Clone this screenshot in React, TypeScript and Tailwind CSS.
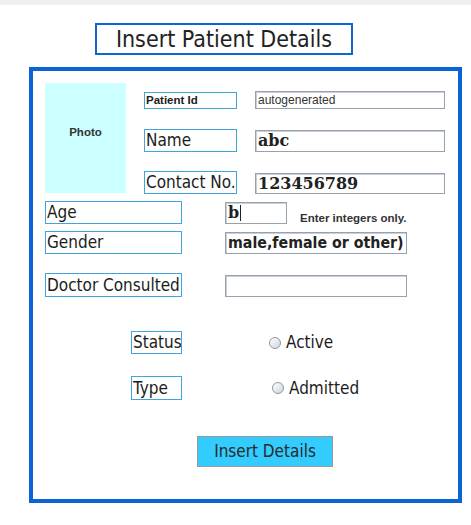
import React from 'react';

// Tahoma-like face for the Swing labels
const label =
  "flex items-center border border-[#3ea6dc] bg-white pl-[1px] text-[17px] leading-none text-[#1c1c1c] font-['DejaVu_Sans_Condensed','DejaVu_Sans',sans-serif] font-stretch-condensed whitespace-nowrap overflow-hidden";

const field =
  'border border-[#98a2af] shadow-[inset_1px_1px_0_#c9cfd7] bg-white flex items-center overflow-hidden whitespace-nowrap';

const Radio = ({ text }: { text: string }) => (
  <div className="flex items-center gap-[5px]">
    <span className="inline-block w-[12px] h-[12px] rounded-full border border-[#8d98a6] bg-linear-to-br from-white to-[#cdd5de]" />
    <span className="text-[17px] leading-none text-[#1c1c1c] font-['DejaVu_Sans_Condensed','DejaVu_Sans',sans-serif] font-stretch-condensed">
      {text}
    </span>
  </div>
);

export default function App() {
  return (
    <div className="w-[471px] h-[525px] bg-white overflow-hidden">
      <div className="h-[5px] bg-[#efefef]" />

      {/* Title */}
      <div className="ml-[95px] mt-[18px] w-[258px] h-[32px] border-2 border-[#0a66d0] flex items-center justify-center text-[23px] leading-none text-[#222] font-['DejaVu_Sans_Condensed','DejaVu_Sans',sans-serif] font-stretch-condensed">
        Insert Patient Details
      </div>

      {/* Form panel */}
      <div className="ml-[29px] mt-[12px] w-[433px] h-[436px] border-4 border-[#0a64d6]">
        <div className="flex ml-[12px] mt-[12px]">
          <div className="w-[81px] h-[110px] bg-[#ccffff] flex items-center justify-center pb-[10px] text-[11.5px] font-bold text-[#333] font-['Liberation_Sans',Arial,sans-serif]">
            Photo
          </div>
          <div className="ml-[18px] mt-[8px] flex flex-col">
            <div className="flex items-end h-[18px]">
              <div className="w-[93px] h-[17px] flex items-center border border-[#3ea6dc] pl-[1px] text-[11.5px] font-bold text-[#1c1c1c] font-['Liberation_Sans',Arial,sans-serif]">
                Patient Id
              </div>
              <div className={`${field} ml-[18px] w-[190px] h-[18px] pl-[2px] text-[12px] text-[#333] font-['Liberation_Sans',Arial,sans-serif]`}>
                autogenerated
              </div>
            </div>
            <div className="flex items-start mt-[20px]">
              <div className={`${label} w-[93px] h-[23px]`}>Name</div>
              <div className={`${field} ml-[18px] mt-[1px] w-[190px] h-[22px] pl-[2px] text-[16px] font-bold text-[#222] font-['DejaVu_Serif',serif]`}>
                abc
              </div>
            </div>
            <div className="flex items-start mt-[19px]">
              <div className={`${label} w-[93px] h-[23px]`}>Contact No.</div>
              <div className={`${field} ml-[18px] mt-[2px] w-[190px] h-[21px] pl-[2px] text-[16px] font-bold text-[#222] font-['DejaVu_Serif',serif]`}>
                123456789
              </div>
            </div>
          </div>
        </div>

        {/* Age */}
        <div className="flex items-start h-[23px] ml-[12px] mt-[7px]">
          <div className={`${label} w-[137px] h-[23px]`}>Age</div>
          <div className={`${field} ml-[43px] mt-[1px] w-[62px] h-[22px] pl-[2px] text-[16px] font-bold text-[#222] font-['DejaVu_Serif',serif]`}>
            b<span className="inline-block w-[1px] h-[16px] bg-[#222] ml-[1px]" />
          </div>
          <div className="ml-[13px] mt-[12px] text-[11.5px] leading-none font-bold text-[#333] font-['Liberation_Sans',Arial,sans-serif]">
            Enter integers only.
          </div>
        </div>

        {/* Gender */}
        <div className="flex items-start ml-[12px] mt-[7px]">
          <div className={`${label} w-[137px] h-[23px]`}>Gender</div>
          <div className={`${field} ml-[43px] mt-[1px] w-[182px] h-[22px] pl-[2px] text-[15.8px] font-bold text-[#222] font-['DejaVu_Sans_Condensed','DejaVu_Sans',sans-serif] font-stretch-condensed`}>
            male,female or other)
          </div>
        </div>

        {/* Doctor */}
        <div className="flex items-start ml-[12px] mt-[19px]">
          <div className={`${label} w-[137px] h-[24px]`}>Doctor Consulted</div>
          <div className={`${field} ml-[43px] mt-[2px] w-[182px] h-[22px]`} />
        </div>

        {/* Status */}
        <div className="flex items-center ml-[98px] mt-[34px]">
          <div className={`${label} w-[51px] h-[23px]`}>Status</div>
          <div className="ml-[87px]">
            <Radio text="Active" />
          </div>
        </div>

        {/* Type */}
        <div className="flex items-center ml-[98px] mt-[22px]">
          <div className={`${label} w-[51px] h-[24px]`}>Type</div>
          <div className="ml-[90px]">
            <Radio text="Admitted" />
          </div>
        </div>

        <div className="ml-[164px] mt-[36px] w-[136px] h-[31px] bg-[#33ccff] border border-[#9a9a9a] flex items-center justify-center text-[17px] leading-none text-[#2a2a2a] font-['DejaVu_Sans_Condensed','DejaVu_Sans',sans-serif] font-stretch-condensed">
          Insert Details
        </div>
      </div>
    </div>
  );
}
